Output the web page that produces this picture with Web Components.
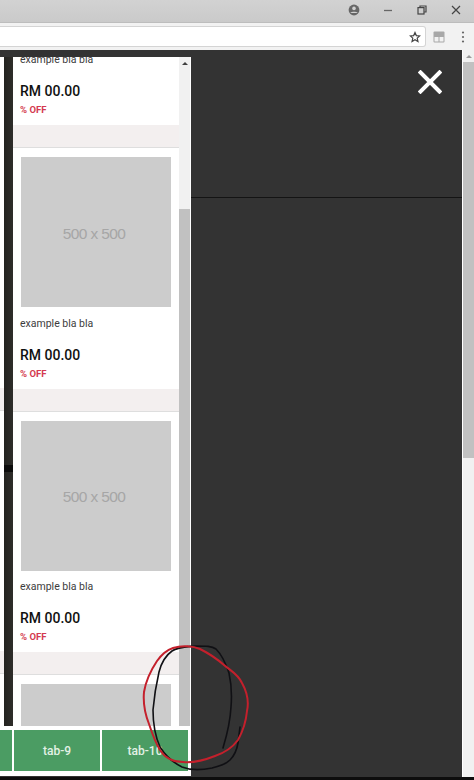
<!DOCTYPE html>
<html>
<head>
<meta charset="utf-8">
<style>
    html, body { margin: 0; padding: 0; height: 100%; overflow: hidden; background: #333; font-family: Roboto, "Liberation Sans", sans-serif; }
</style>
</head>
<body>
<v-app></v-app>
<script>
customElements.define('v-window-bar', class extends HTMLElement {
    constructor() {
        super();
        const shadowRoot = this.attachShadow({mode: 'open'});
        shadowRoot.innerHTML = `<style>
            :host { display: flex; justify-content: flex-end; height: 22px; background: linear-gradient(#d2d2d2, #cacaca); padding-right: 1px; box-sizing: border-box; }
            .btn { width: 34px; height: 20px; display: flex; align-items: center; justify-content: center; }
            svg { display: block; }
        </style>
        <div class="btn"><svg width="12" height="12" viewBox="0 0 12 12"><circle cx="6" cy="6" r="5.4" fill="#666"/><circle cx="6" cy="4.4" r="1.8" fill="#d0d0d0"/><path d="M2.6 8.6c1-1.3 5.8-1.3 6.8 0v.4H2.6z" fill="#d0d0d0"/></svg></div>
        <div class="btn"><svg width="10" height="10" viewBox="0 0 10 10"><path d="M1 5.5h8" stroke="#666" stroke-width="1.3"/></svg></div>
        <div class="btn"><svg width="10" height="10" viewBox="0 0 10 10" fill="none" stroke="#444" stroke-width="1.2"><rect x="1" y="2.6" width="6" height="6.4"/><path d="M3 2.4V1h6v6H7.2"/></svg></div>
        <div class="btn"><svg width="10" height="10" viewBox="0 0 10 10"><path d="M1 1l8 8M9 1l-8 8" stroke="#444" stroke-width="1.2"/></svg></div>`;
    }
});

customElements.define('v-toolbar', class extends HTMLElement {
    constructor() {
        super();
        const shadowRoot = this.attachShadow({mode: 'open'});
        shadowRoot.innerHTML = `<style>
            :host { display: flex; height: 28px; background: #f2f2f2; box-sizing: border-box; padding-top: 3px; border-top: 1px solid #bdbdbd; }
            .address { width: 426px; height: 21px; box-sizing: border-box; background: #fff; border: 1px solid #d4d4d4; border-left: 0; border-radius: 0 3px 3px 0; display: flex; justify-content: flex-end; align-items: center; padding-right: 4px; }
            .icon { height: 21px; display: flex; align-items: center; justify-content: center; }
            .ext { width: 25px; }
            .menu { width: 23px; }
            svg { display: block; }
        </style>
        <div class="address"><svg width="12" height="12" viewBox="0 0 24 24"><path d="M12 3l2.7 6.2 6.8.6-5.100 4.500 1.500 6.600L12 17.400l-5.900 3.500 1.500-6.600-5.100-4.500 6.800-.6z" fill="none" stroke="#444" stroke-width="2.400"/></svg></div>
        <div class="icon ext"><svg width="12" height="12" viewBox="0 0 12 12"><rect x="0.500" y="0.500" width="11" height="11" rx="1" fill="#a8a8a8"/><rect x="1.500" y="6" width="4" height="4.500" fill="#f2f2f2"/><rect x="6.500" y="6" width="4" height="4.500" fill="#f2f2f2"/></svg></div>
        <div class="icon menu"><svg width="4" height="12" viewBox="0 0 4 12" fill="#666"><circle cx="2" cy="1.500" r="1.100"/><circle cx="2" cy="6" r="1.100"/><circle cx="2" cy="10.500" r="1.100"/></svg></div>`;
    }
});

customElements.define('v-scrollbar', class extends HTMLElement {
    constructor() {
        super();
        const shadowRoot = this.attachShadow({mode: 'open'});
        const before = this.getAttribute('before');
        const size = this.getAttribute('size');
        shadowRoot.innerHTML = `<style>
            :host { display: flex; flex-direction: column; align-items: stretch; background: #f1f1f1; flex: none; box-sizing: border-box; }
            .arrow { height: 12px; flex: none; display: flex; align-items: center; justify-content: center; }
            .arrow i { display: block; width: 0; height: 0; border: 3px solid transparent; border-top: 0; border-bottom: 3px solid var(--arrow, #505050); }
            .before { height: ${before}px; flex: none; }
            .thumb { height: ${size}px; flex: none; background: #c1c1c1; }
        </style>
        <div class="arrow"><i></i></div>
        <div class="before"></div>
        <div class="thumb"></div>`;
    }
});

customElements.define('v-product', class extends HTMLElement {
    constructor() {
        super();
        const shadowRoot = this.attachShadow({mode: 'open'});
        shadowRoot.innerHTML = `<style>
            :host { display: block; background: #fff; height: 263.500px; box-sizing: border-box; padding-top: 8px; }
            .pic { margin: 0 8px; width: 150px; height: 150px; padding: 3px 4px 0 0; background: #ccc; color: #a6a6a6; font: 15.500px "Liberation Sans", Arial, sans-serif; letter-spacing: -0.6px; display: flex; align-items: center; justify-content: center; box-sizing: border-box; }
            .name { margin: 9.500px 7px 0; height: 14px; line-height: 14px; font-size: 10.500px; color: #3c3c3c; }
            .price { margin: 16px 7px 0; height: 17px; line-height: 17px; font-size: 14px; font-weight: 500; color: #111; }
            .off { margin: 4px 7px 0; height: 12px; line-height: 12px; font-size: 9.500px; font-weight: 700; color: #d43a50; }
            .band { margin-top: 9px; height: 22px; background: #f3efef; border-bottom: 1px solid #dedede; }
        </style>
        <div class="pic"><slot name="pic"></slot></div>
        <div class="name"><slot name="name"></slot></div>
        <div class="price"><slot name="price"></slot></div>
        <div class="off"><slot name="off"></slot></div>
        <div class="band"></div>`;
    }
});

customElements.define('v-product-list', class extends HTMLElement {
    constructor() {
        super();
        const shadowRoot = this.attachShadow({mode: 'open'});
        shadowRoot.innerHTML = `<style>
            :host { display: block; flex: 1; min-width: 0; overflow: hidden; background: #fff; }
            .items { margin-top: -171.500px; }
        </style>
        <div class="items"><slot></slot></div>`;
    }
});

customElements.define('v-tab', class extends HTMLElement {
    constructor() {
        super();
        const shadowRoot = this.attachShadow({mode: 'open'});
        shadowRoot.innerHTML = `<style>
            :host { display: flex; align-items: center; justify-content: center; flex: none; width: 86px; height: 41px; background: #4b9c63; color: #e2f1e5; font-size: 12px; font-weight: 500; }
        </style><slot></slot>`;
    }
});

customElements.define('v-tab-bar', class extends HTMLElement {
    constructor() {
        super();
        const shadowRoot = this.attachShadow({mode: 'open'});
        shadowRoot.innerHTML = `<style>
            :host { display: flex; gap: 2px; background: #fff; padding: 4px 3px 4px 0; height: 50px; box-sizing: border-box; overflow: hidden; }
            ::slotted(.cut) { width: 12px; }
        </style><slot></slot>`;
    }
});

customElements.define('v-drawer', class extends HTMLElement {
    constructor() {
        super();
        const shadowRoot = this.attachShadow({mode: 'open'});
        shadowRoot.innerHTML = `<style>
            :host { display: flex; flex-direction: column; flex: none; width: 191px; padding-top: 7px; box-sizing: border-box; --arrow: #404040; }
            .body { display: flex; height: 669px; background: #fff; }
            .edge { width: 4px; flex: none; background:
                linear-gradient(#fff 331px, #f3efef 331px, #f3efef 353px, #dedede 353px, #dedede 354px, #fff 354px, #fff 594px, #f3efef 594px, #f3efef 616px, #dedede 616px, #dedede 617px, #fff 617px); }
            .strip { width: 9px; flex: none; background:
                linear-gradient(transparent 408px, #0c0c0c 408px, #0c0c0c 415px, transparent 415px),
                linear-gradient(90deg, #232320, #2e2d2a); }
            .side { width: 12px; border-right: 1px solid #fff; }
        </style>
        <div class="body">
            <div class="edge"></div>
            <div class="strip"></div>
            <slot></slot>
            <v-scrollbar class="side" before="140" size="517"></v-scrollbar>
        </div>
        <slot name="tabs"></slot>`;
    }
});

customElements.define('v-overlay', class extends HTMLElement {
    constructor() {
        super();
        const shadowRoot = this.attachShadow({mode: 'open'});
        shadowRoot.innerHTML = `<style>
            :host { display: block; flex: 1; min-width: 0; background: #333; }
            .head { height: 148px; box-sizing: border-box; border-bottom: 1px solid #141414; display: flex; justify-content: flex-end; padding: 20px 20px 0 0; }
            svg { display: block; }
        </style>
        <div class="head"><svg width="24" height="24" viewBox="0 0 24 24"><path d="M2.500 2.500l19 19M21.500 2.500l-19 19" stroke="#fff" stroke-width="4" stroke-linecap="square"/></svg></div>`;
    }
});

customElements.define('v-scribble', class extends HTMLElement {
    constructor() {
        super();
        const shadowRoot = this.attachShadow({mode: 'open'});
        shadowRoot.innerHTML = `<style>
            :host { position: absolute; left: 0; top: 0; width: 474px; height: 780px; pointer-events: none; }
            svg { display: block; }
        </style>
        <svg width="474" height="780" viewBox="0 0 474 780" fill="none" stroke-linecap="round" stroke-linejoin="round">
            <path d="M223 748C226 738 230 725 231 707C232 695 231 682 229 673C226 664 222 655 216 649C212 646 206 646 195 646C185 647 178 647 172 651C165 656 161 664 159 672C156 685 154 698 153 710C153 725 156 738 160 747C165 755 172 762 182 767C192 771 202 770 212 768C220 766 226 764 230 760C235 755 237 749 238 743L240 727" stroke="#101014" stroke-width="1.600"/>
            <path d="M173 648C182 645 193 646 200 649C208 653 216 658 224 665C231 671 238 674 242 683C247 692 249 702 247 711C246 722 243 731 238 740C232 748 224 753 215 756C205 760 193 763 183 762C172 762 165 758 160 750C155 742 152 733 149 724C145 714 143 703 144 692C146 680 151 670 157 661C162 654 167 650 173 648Z" stroke="#c4202c" stroke-width="2"/>
        </svg>`;
    }
});

customElements.define('v-app', class extends HTMLElement {
    constructor() {
        super();
        const shadowRoot = this.attachShadow({mode: 'open'});
        shadowRoot.innerHTML = `<style>
            :host { display: flex; flex-direction: column; position: relative; width: 474px; height: 780px; overflow: hidden; }
            .page { display: flex; height: 727px; background: #333; }
            .page-bar { width: 12px; border-left: 1px solid #fff; --arrow: #9a9a9a; }
            .bottom { flex: 1; background: #0d0d0d; }
        </style>
        <v-window-bar></v-window-bar>
        <v-toolbar></v-toolbar>
        <div class="page">
            <v-drawer>
                <v-product-list>
                    <v-product>
                        <span slot="name">example bla bla</span>
                        <span slot="price">RM 00.00</span>
                        <span slot="off">% OFF</span>
                    </v-product>
                    <v-product>
                        <span slot="pic">500 x 500</span>
                        <span slot="name">example bla bla</span>
                        <span slot="price">RM 00.00</span>
                        <span slot="off">% OFF</span>
                    </v-product>
                    <v-product>
                        <span slot="pic">500 x 500</span>
                        <span slot="name">example bla bla</span>
                        <span slot="price">RM 00.00</span>
                        <span slot="off">% OFF</span>
                    </v-product>
                    <v-product></v-product>
                </v-product-list>
                <v-tab-bar slot="tabs">
                    <v-tab class="cut"></v-tab>
                    <v-tab>tab-9</v-tab>
                    <v-tab>tab-10</v-tab>
                </v-tab-bar>
            </v-drawer>
            <v-overlay></v-overlay>
            <v-scrollbar class="page-bar" before="0" size="396"></v-scrollbar>
        </div>
        <div class="bottom"></div>
        <v-scribble></v-scribble>`;
    }
});
</script>
</body>
</html>
